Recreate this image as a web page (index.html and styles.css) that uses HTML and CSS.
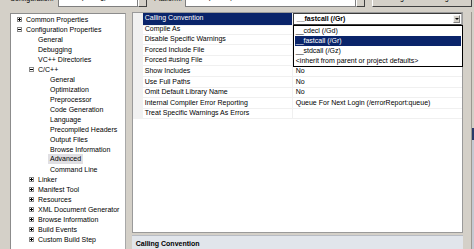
FILE: index.html
```html
<!DOCTYPE html>
<html lang="en">
<head>
  <meta charset="UTF-8" />
  <title>Property Pages</title>
  <link rel="stylesheet" href="styles.css">
</head>
<body>
  <div class="toolbar">
    <span class="lbl cfg-lbl">Configuration:</span>
    <div class="combo cfg"><span>Active(Debug)</span></div>
    <div class="drop"></div>
    <span class="lbl plat-lbl">Platform:</span>
    <div class="combo plat"><span>Active(Win32)</span></div>
    <div class="drop"></div>
    <button class="mgr">Configuration Manager...</button>
  </div>

  <div class="main">
    <div class="tree">
      <div class="item l0"><i class="exp plus"></i>Common Properties</div>
      <div class="item l0"><i class="exp"></i>Configuration Properties</div>
      <div class="item l1"><i class="exp none"></i>General</div>
      <div class="item l1"><i class="exp none"></i>Debugging</div>
      <div class="item l1"><i class="exp none"></i>VC++ Directories</div>
      <div class="item l1"><i class="exp"></i>C/C++</div>
      <div class="item l2"><i class="exp none"></i>General</div>
      <div class="item l2"><i class="exp none"></i>Optimization</div>
      <div class="item l2"><i class="exp none"></i>Preprocessor</div>
      <div class="item l2"><i class="exp none"></i>Code Generation</div>
      <div class="item l2"><i class="exp none"></i>Language</div>
      <div class="item l2"><i class="exp none"></i>Precompiled Headers</div>
      <div class="item l2"><i class="exp none"></i>Output Files</div>
      <div class="item l2"><i class="exp none"></i>Browse Information</div>
      <div class="item l2"><i class="exp none"></i><span class="sel">Advanced</span></div>
      <div class="item l2"><i class="exp none"></i>Command Line</div>
      <div class="item l1"><i class="exp plus"></i>Linker</div>
      <div class="item l1"><i class="exp plus"></i>Manifest Tool</div>
      <div class="item l1"><i class="exp plus"></i>Resources</div>
      <div class="item l1"><i class="exp plus"></i>XML Document Generator</div>
      <div class="item l1"><i class="exp plus"></i>Browse Information</div>
      <div class="item l1"><i class="exp plus"></i>Build Events</div>
      <div class="item l1"><i class="exp plus"></i>Custom Build Step</div>
    </div>

    <div class="right">
      <div class="grid">
        <div class="row active">
          <div class="gut"></div>
          <div class="name">Calling Convention</div>
          <div class="val">
            <div class="valcombo"><b>__fastcall (/Gr)</b><i class="arrow"></i></div>
          </div>
        </div>
        <div class="row"><div class="gut"></div><div class="name">Compile As</div><div class="val"></div></div>
        <div class="row"><div class="gut"></div><div class="name">Disable Specific Warnings</div><div class="val"></div></div>
        <div class="row"><div class="gut"></div><div class="name">Forced Include File</div><div class="val"></div></div>
        <div class="row"><div class="gut"></div><div class="name">Forced #using File</div><div class="val"></div></div>
        <div class="row"><div class="gut"></div><div class="name">Show Includes</div><div class="val">No</div></div>
        <div class="row"><div class="gut"></div><div class="name">Use Full Paths</div><div class="val">No</div></div>
        <div class="row"><div class="gut"></div><div class="name">Omit Default Library Name</div><div class="val">No</div></div>
        <div class="row"><div class="gut"></div><div class="name">Internal Compiler Error Reporting</div><div class="val">Queue For Next Login (/errorReport:queue)</div></div>
        <div class="row"><div class="gut"></div><div class="name">Treat Specific Warnings As Errors</div><div class="val"></div></div>

        <!-- open dropdown of the Calling Convention combo -->
        <div class="list">
          <div class="opt">__cdecl (/Gd)</div>
          <div class="opt hi">__fastcall (/Gr)</div>
          <div class="opt">__stdcall (/Gz)</div>
          <div class="opt">&lt;inherit from parent or project defaults&gt;</div>
        </div>
      </div>
      <div class="desc"><b>Calling Convention</b></div>
    </div>

    <div class="edge"></div>
  </div>
</body>
</html>
```

FILE: styles.css
```css
body {
  margin: 0;
  background: #d4d0c8;
  font-family: 'Liberation Sans', Arial, sans-serif;
  font-size: 7px;
  color: #000;
  overflow: hidden;
}
.toolbar {
  display: flex;
  align-items: flex-end;
  height: 20px;
  margin-top: -13px;
  padding-left: 10px;
}
.lbl {
  line-height: 10px;
  margin-bottom: 3px;
}
.cfg-lbl {
  width: 48px;
}
.plat-lbl {
  width: 31px;
  margin-left: 7px;
}
.combo {
  height: 18px;
  background: #fff;
  border: 1px solid #7f7f7f;
  box-sizing: border-box;
  line-height: 14px;
  padding-left: 3px;
}
.combo.cfg {
  width: 80px;
}
.combo.plat {
  width: 171px;
}
.drop {
  width: 9px;
  height: 18px;
  background: #d4d0c8;
  border: 1px solid #fff;
  border-right-color: #404040;
  border-bottom-color: #404040;
  box-sizing: border-box;
}
.mgr {
  margin-left: 7px;
  width: 100px;
  height: 20px;
  padding: 0;
  font: inherit;
  background: #d4d0c8;
  border: 1px solid #fff;
  border-right-color: #404040;
  border-bottom-color: #404040;
}

.main {
  display: flex;
  margin-top: 5px;
}
.tree {
  margin-left: 10px;
  margin-top: 1px;
  width: 116px;
  height: 260px;
  box-sizing: border-box;
  background: #fff;
  border: 1px solid #8c8c8c;
  border-right-color: #a8a8a8;
}
.item {
  display: flex;
  align-items: center;
  height: 10px;
  white-space: nowrap;
}
.item.l0 { padding-left: 6px; }
.item.l1 { padding-left: 18px; }
.item.l2 { padding-left: 30px; }
.exp {
  position: relative;
  width: 5px;
  height: 5px;
  margin-right: 4px;
  box-sizing: border-box;
  border: 1px solid #8a8a8a;
  background: #fff;
  flex: none;
}
.exp::before {
  content: "";
  position: absolute;
  left: 0;
  top: 1px;
  width: 3px;
  height: 1px;
  background: #000;
}
.exp.plus::after {
  content: "";
  position: absolute;
  left: 1px;
  top: 0;
  width: 1px;
  height: 3px;
  background: #000;
}
.exp.none {
  visibility: hidden;
}
.sel {
  background: #e0dfe3;
  margin-left: -2px;
  padding: 0 2px;
  line-height: 10px;
}

.right {
  margin-left: 6px;
  width: 332px;
}
.grid {
  position: relative;
  height: 221px;
  box-sizing: border-box;
  background: #fff;
  border: 1px solid #9a9a9a;
}
.row {
  display: grid;
  grid-template-columns: 10px 150px 1fr;
  height: 10.6px;
  line-height: 10px;
  white-space: nowrap;
}
.gut {
  background: #f1f1f1;
}
.name {
  padding-left: 2px;
  border-bottom: 1px solid #f0f0f0;
  border-right: 1px solid #f0f0f0;
}
.val {
  padding-left: 3px;
  border-bottom: 1px solid #f0f0f0;
}
.row.active .name {
  background: #0a246a;
  color: #fff;
}
.row.active .val {
  padding: 0;
  position: relative;
  z-index: 1;
}
.valcombo {
  position: relative;
  height: 12px;
  box-sizing: border-box;
  background: #fff;
  border: 1px solid #3c3c3c;
  border-right-color: #b0b0b0;
  padding-left: 3px;
  line-height: 10px;
}
.arrow {
  position: absolute;
  right: 1px;
  top: 1px;
  width: 7px;
  height: 8px;
  background: #d4d0c8;
  border: 1px solid #f4f4f4;
  border-right-color: #808080;
  border-bottom-color: #808080;
  box-sizing: border-box;
}
.arrow::after {
  content: "";
  position: absolute;
  left: 1px;
  top: 2px;
  border-left: 2px solid transparent;
  border-right: 2px solid transparent;
  border-top: 2px solid #000;
}
.list {
  position: absolute;
  top: 12px;
  left: 160px;
  width: 170px;
  height: 42px;
  box-sizing: border-box;
  background: #fff;
  border: 1px solid #000;
  padding: 0 1px;
  z-index: 2;
}
.opt {
  height: 10px;
  line-height: 10px;
  padding-left: 1px;
  white-space: nowrap;
}
.opt.hi {
  background: #0a246a;
  color: #fff;
}
.desc {
  margin-top: 2px;
  height: 20px;
  box-sizing: border-box;
  background: #e1e5eb;
  border-top: 1px solid #b8bcc4;
  padding: 3px 4px;
  line-height: 10px;
}
.edge {
  margin-left: 8px;
  width: 2px;
  height: 260px;
  border-left: 1px solid #9c9890;
  background: linear-gradient(to bottom, #d4d0c8 116px, #2a3a6a 116px, #2a3a6a 128px, #c4c9d2 128px);
}
```
